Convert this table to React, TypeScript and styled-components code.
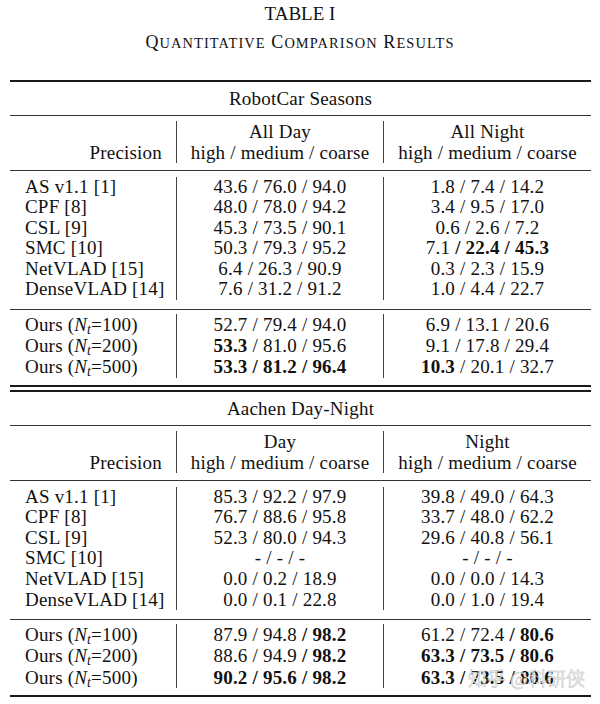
import React from 'react';
import styled, { createGlobalStyle } from 'styled-components';

const GlobalStyle = createGlobalStyle`
  html, body { margin: 0; padding: 0; background: #ffffff; }
  body { font-family: "Liberation Serif", "Times New Roman", serif; color: #111; }
`;

const Page = styled.div`
  position: relative;
  width: 600px;
  height: 704px;
  background: #fff;
  font-family: "Liberation Serif", "Times New Roman", serif;
  color: #111;
  overflow: hidden;
`;

const Caption = styled.header`
  display: flex;
  flex-direction: column;
  align-items: center;
  padding-top: 3px;
  gap: 8px;
`;

const TableNo = styled.div`
  font-size: 19px;
  line-height: 21px;
`;

const Subtitle = styled.div`
  font-size: 18px;
  line-height: 21px;
  letter-spacing: 1.1px;
`;

const Small = styled.span`
  font-size: 14.4px;
`;

const Table = styled.div`
  margin: 26px 0 0 10px;
  width: 581px;
  font-size: 19px;
  letter-spacing: 0.2px;
`;

const Section = styled.section`
  border-top: 2px solid #1a1a1a;
  border-bottom: 2px solid #1a1a1a;
  & + & {
    margin-top: 3px;
  }
`;

const GroupTitle = styled.div`
  padding: 5.5px 0 6px;
  line-height: 21px;
  text-align: center;
`;

const Block = styled.div<{ $lh: number; $pt: number; $pb: number }>`
  display: grid;
  grid-template-columns: 166px 207px 1fr;
  border-top: 1px solid #333;
  padding: ${(p) => p.$pt}px 0 ${(p) => p.$pb}px;
  line-height: ${(p) => p.$lh}px;
`;

const LabelCol = styled.div<{ $head?: boolean }>`
  display: flex;
  flex-direction: column;
  justify-content: flex-end;
  text-align: ${(p) => (p.$head ? 'right' : 'left')};
  padding: ${(p) => (p.$head ? '0 14px 0 0' : '0 0 0 15px')};
`;

const ValueCol = styled.div`
  display: flex;
  flex-direction: column;
  text-align: center;
  border-left: 1px solid #444;
`;

const Line = styled.div`
  white-space: nowrap;
`;

const Bold = styled.span`
  font-weight: 700;
`;

const MathN = styled.i`
  font-style: italic;
`;

const Sub = styled.sub`
  font-size: 0.72em;
  font-style: italic;
  line-height: 0;
  vertical-align: -0.25em;
`;

const Watermark = styled.div`
  position: absolute;
  right: 15px;
  top: 668px;
  font-family: "Noto Sans CJK SC", "Noto Sans", sans-serif;
  font-size: 19px;
  line-height: 20px;
  color: rgba(236, 236, 236, 0.88);
  -webkit-text-stroke: 0.4px rgba(150, 150, 150, 0.7);
  white-space: nowrap;
  pointer-events: none;
`;

type Row = { label: React.ReactNode; a: string; b: string };

const Triple: React.FC<{ spec: string }> = ({ spec }) => {
  const parts = spec.split('/').map((s) => s.trim());
  return (
    <>
      {parts.map((p, i) => {
        const bold = p.startsWith('*');
        const txt = bold ? p.slice(1) : p;
        const sep = i > 0 ? ' / ' : '';
        return bold ? (
          <Bold key={i}>
            {sep}
            {txt}
          </Bold>
        ) : (
          <React.Fragment key={i}>
            {sep}
            {txt}
          </React.Fragment>
        );
      })}
    </>
  );
};

const Ours: React.FC<{ n: number }> = ({ n }) => (
  <>
    Ours (<MathN>N</MathN>
    <Sub>t</Sub>={n})
  </>
);

type SectionData = {
  title: string;
  cols: [string, string];
  methods: Row[];
  ours: Row[];
};

const labels = ['AS v1.1 [1]', 'CPF [8]', 'CSL [9]', 'SMC [10]', 'NetVLAD [15]', 'DenseVLAD [14]'];

const mk = (vals: [string, string][]): Row[] => vals.map(([a, b], i) => ({ label: labels[i], a, b }));
const mkOurs = (vals: [string, string][]): Row[] =>
  vals.map(([a, b], i) => ({ label: <Ours n={[100, 200, 500][i]} />, a, b }));

const sections: SectionData[] = [
  {
    title: 'RobotCar Seasons',
    cols: ['All Day', 'All Night'],
    methods: mk([
      ['43.6 / 76.0 / 94.0', '1.8 / 7.4 / 14.2'],
      ['48.0 / 78.0 / 94.2', '3.4 / 9.5 / 17.0'],
      ['45.3 / 73.5 / 90.1', '0.6 / 2.6 / 7.2'],
      ['50.3 / 79.3 / 95.2', '7.1 / *22.4 / *45.3'],
      ['6.4 / 26.3 / 90.9', '0.3 / 2.3 / 15.9'],
      ['7.6 / 31.2 / 91.2', '1.0 / 4.4 / 22.7'],
    ]),
    ours: mkOurs([
      ['52.7 / 79.4 / 94.0', '6.9 / 13.1 / 20.6'],
      ['*53.3 / 81.0 / 95.6', '9.1 / 17.8 / 29.4'],
      ['*53.3 / *81.2 / *96.4', '*10.3 / 20.1 / 32.7'],
    ]),
  },
  {
    title: 'Aachen Day-Night',
    cols: ['Day', 'Night'],
    methods: mk([
      ['85.3 / 92.2 / 97.9', '39.8 / 49.0 / 64.3'],
      ['76.7 / 88.6 / 95.8', '33.7 / 48.0 / 62.2'],
      ['52.3 / 80.0 / 94.3', '29.6 / 40.8 / 56.1'],
      ['- / - / -', '- / - / -'],
      ['0.0 / 0.2 / 18.9', '0.0 / 0.0 / 14.3'],
      ['0.0 / 0.1 / 22.8', '0.0 / 1.0 / 19.4'],
    ]),
    ours: mkOurs([
      ['87.9 / 94.8 / *98.2', '61.2 / 72.4 / *80.6'],
      ['88.6 / 94.9 / *98.2', '*63.3 / *73.5 / *80.6'],
      ['*90.2 / *95.6 / *98.2', '*63.3 / *73.5 / *80.6'],
    ]),
  },
];

const RowsBlock: React.FC<{ rows: Row[]; lh: number; pt: number; pb: number }> = ({ rows, lh, pt, pb }) => (
  <Block $lh={lh} $pt={pt} $pb={pb}>
    <LabelCol>
      {rows.map((r, i) => (
        <Line key={i}>{r.label}</Line>
      ))}
    </LabelCol>
    <ValueCol>
      {rows.map((r, i) => (
        <Line key={i}>
          <Triple spec={r.a} />
        </Line>
      ))}
    </ValueCol>
    <ValueCol>
      {rows.map((r, i) => (
        <Line key={i}>
          <Triple spec={r.b} />
        </Line>
      ))}
    </ValueCol>
  </Block>
);

const DatasetSection: React.FC<{ data: SectionData }> = ({ data }) => (
  <Section>
    <GroupTitle>{data.title}</GroupTitle>
    <Block $lh={21} $pt={5} $pb={7}>
      <LabelCol $head>
        <Line>Precision</Line>
      </LabelCol>
      {data.cols.map((c) => (
        <ValueCol key={c}>
          <Line>{c}</Line>
          <Line>high / medium / coarse</Line>
        </ValueCol>
      ))}
    </Block>
    <RowsBlock rows={data.methods} lh={20.6} pt={6} pb={8.5} />
    <RowsBlock rows={data.ours} lh={21.2} pt={4.5} pb={7.5} />
  </Section>
);

export default function App() {
  return (
    <Page>
      <GlobalStyle />
      <Caption>
        <TableNo>TABLE I</TableNo>
        <Subtitle>
          Q<Small>UANTITATIVE</Small> C<Small>OMPARISON</Small> R<Small>ESULTS</Small>
        </Subtitle>
      </Caption>
      <Table>
        {sections.map((s) => (
          <DatasetSection key={s.title} data={s} />
        ))}
      </Table>
      <Watermark>知乎 @科研侠</Watermark>
    </Page>
  );
}
